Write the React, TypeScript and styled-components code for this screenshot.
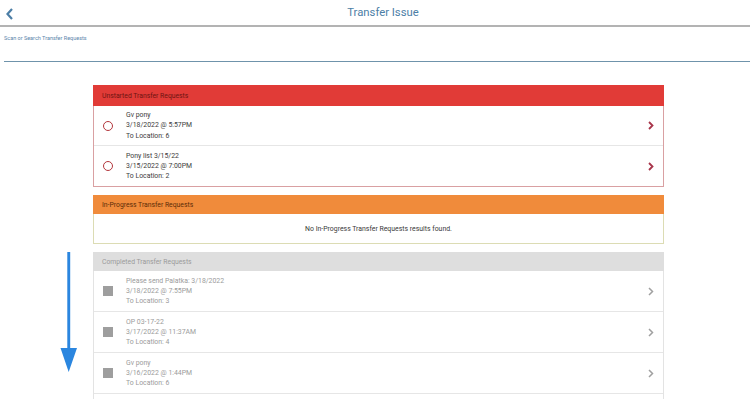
import React from "react";
import styled, { createGlobalStyle } from "styled-components";

const GlobalStyle = createGlobalStyle`
  *, *::before, *::after {
    box-sizing: border-box;
  }
  html, body {
    margin: 0;
    padding: 0;
    background: #ffffff;
    font-family: Roboto, "Liberation Sans", sans-serif;
  }
`;

const Page = styled.div`
  position: relative;
  width: 750px;
  height: 399px;
  overflow: hidden;
  background: #fff;
`;

const TopBar = styled.div`
  height: 27px;
  display: flex;
  align-items: center;
  justify-content: center;
  position: relative;
  border-bottom: 2px solid #b3b3b3;
`;

const BackButton = styled.div`
  position: absolute;
  left: 5px;
  top: 6px;
  width: 10px;
  height: 14px;
`;

const Title = styled.h1`
  margin: 0;
  font-size: 11.3px;
  font-weight: 400;
  color: #4c7ea6;
  padding-left: 16px;
`;

const SearchField = styled.div`
  margin: 0 0 0 4px;
  height: 35px;
  border-bottom: 1.5px solid #6f93ab;
  padding-top: 8px;
`;

const SearchLabel = styled.div`
  font-size: 5.5px;
  color: #5b86ab;
`;

const Content = styled.div`
  padding: 23px 86px 0 93px;
  display: flex;
  flex-direction: column;
  gap: 8px;
`;

const Panel = styled.div<{ $border: string }>`
  border: 1px solid ${(p) => p.$border};
  border-top: none;
  background: #fff;
`;

const PanelHeader = styled.div<{ $bg: string; $color: string; $h: number }>`
  height: ${(p) => p.$h}px;
  background: ${(p) => p.$bg};
  color: ${(p) => p.$color};
  font-size: 6.8px;
  display: flex;
  align-items: center;
  padding-left: 9px;
  margin: 0 -1px;
`;

const Row = styled.div<{ $h: number }>`
  height: ${(p) => p.$h}px;
  display: flex;
  align-items: center;
  border-bottom: 1px solid #e6e6e6;
  &:last-child {
    border-bottom: none;
  }
`;

const IconCell = styled.div`
  width: 28px;
  display: flex;
  justify-content: center;
`;

const Ring = styled.div`
  width: 10px;
  height: 10px;
  border: 1.6px solid #b3363c;
  border-radius: 50%;
`;

const Square = styled.div`
  width: 10px;
  height: 10px;
  background: #9e9e9e;
`;

const Lines = styled.div<{ $muted?: boolean }>`
  flex: 1;
  padding-left: 4px;
  font-size: 6.9px;
  line-height: 10.3px;
  color: ${(p) => (p.$muted ? "#9b9b9b" : "#3c3c3c")};
`;

const Chevron = styled.div`
  width: 24px;
  display: flex;
  justify-content: center;
`;

const EmptyBody = styled.div`
  height: 29px;
  display: flex;
  align-items: center;
  justify-content: center;
  font-size: 6.9px;
  color: #3a3a3a;
`;

const ArrowOverlay = styled.svg`
  position: absolute;
  left: 58px;
  top: 250px;
`;

type Item = { name: string; date: string; loc: string };

const unstarted: Item[] = [
  { name: "Gv pony", date: "3/18/2022 @ 5:57PM", loc: "To Location: 6" },
  { name: "Pony list 3/15/22", date: "3/15/2022 @ 7:00PM", loc: "To Location: 2" },
];

const completed: Item[] = [
  { name: "Please send Palatka: 3/18/2022", date: "3/18/2022 @ 7:55PM", loc: "To Location: 3" },
  { name: "OP 03-17-22", date: "3/17/2022 @ 11:37AM", loc: "To Location: 4" },
  { name: "Gv pony", date: "3/16/2022 @ 1:44PM", loc: "To Location: 6" },
  { name: "", date: "", loc: "" },
];

const ChevronIcon = ({ color, w }: { color: string; w: number }) => (
  <svg width="6" height="9" viewBox="0 0 6 9">
    <path d="M1 1 L4.5 4.5 L1 8" fill="none" stroke={color} strokeWidth={w} />
  </svg>
);

export default function App() {
  return (
    <Page>
      <GlobalStyle />
      <TopBar>
        <BackButton>
          <svg width="10" height="14" viewBox="0 0 10 14">
            <path d="M7 2 L2.5 7 L7 12" fill="none" stroke="#4c7ea6" strokeWidth="2.2" />
          </svg>
        </BackButton>
        <Title>Transfer Issue</Title>
      </TopBar>
      <SearchField>
        <SearchLabel>Scan or Search Transfer Requests</SearchLabel>
      </SearchField>
      <Content>
        <Panel $border="#d9a0a2">
          <PanelHeader $bg="#e13b37" $color="#6e1412" $h={21}>
            Unstarted Transfer Requests
          </PanelHeader>
          {unstarted.map((it) => (
            <Row key={it.name} $h={40}>
              <IconCell>
                <Ring />
              </IconCell>
              <Lines>
                <div>{it.name}</div>
                <div>{it.date}</div>
                <div>{it.loc}</div>
              </Lines>
              <Chevron>
                <ChevronIcon color="#a8354a" w={1.8} />
              </Chevron>
            </Row>
          ))}
        </Panel>
        <Panel $border="#dcdcb4">
          <PanelHeader $bg="#f08b3b" $color="#5c2b08" $h={19}>
            In-Progress Transfer Requests
          </PanelHeader>
          <EmptyBody>No In-Progress Transfer Requests results found.</EmptyBody>
        </Panel>
        <Panel $border="#e3e3e3">
          <PanelHeader $bg="#dedede" $color="#9a9a9a" $h={19}>
            Completed Transfer Requests
          </PanelHeader>
          {completed.map((it, i) => (
            <Row key={i} $h={41}>
              <IconCell>{it.name && <Square />}</IconCell>
              <Lines $muted>
                <div>{it.name}</div>
                <div>{it.date}</div>
                <div>{it.loc}</div>
              </Lines>
              <Chevron>{it.name && <ChevronIcon color="#a0a0a0" w={1.5} />}</Chevron>
            </Row>
          ))}
        </Panel>
      </Content>
      <ArrowOverlay width="22" height="124" viewBox="0 0 22 124">
        <path d="M9.3 2 L12.2 2 L12.2 98 L19 98 L10.7 122 L2.5 98 L9.3 98 Z" fill="#2b86df" />
      </ArrowOverlay>
    </Page>
  );
}
